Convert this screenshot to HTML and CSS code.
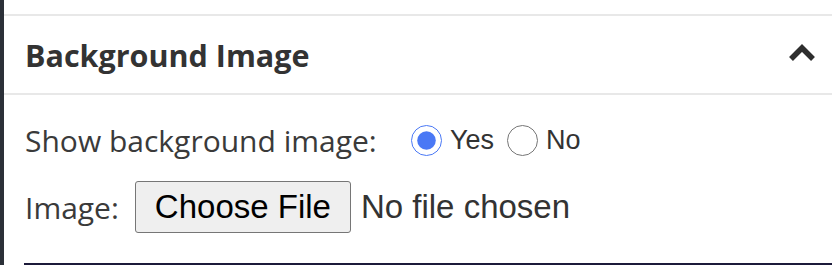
FILE: index.html
```html
<!DOCTYPE html>
<html lang="en">
<head>
    <meta charset="UTF-8">
    <meta name="viewport" content="width=device-width, initial-scale=1.0">
    <title>Background Image</title>
    <link rel="stylesheet" href="styles.css">
</head>
<body>
    <div class="sidebar-edge"></div>

    <div class="panel">
        <div class="panel-gap"></div>

        <section class="settings-section">
            <div class="section-header">
                <h2>Background Image</h2>
                <svg class="chevron" width="28" height="20" viewBox="0 0 28 20">
                    <polyline points="3,16 14,5 25,16" fill="none" stroke="#2e2e2e" stroke-width="5.5" stroke-linejoin="miter"/>
                </svg>
            </div>

            <div class="section-body">
                <div class="form-row">
                    <span class="field-label">Show background image:</span>
                    <label class="radio-option">
                        <input type="radio" name="show-bg" value="yes" checked>
                        <span>Yes</span>
                    </label>
                    <label class="radio-option">
                        <input type="radio" name="show-bg" value="no">
                        <span>No</span>
                    </label>
                </div>

                <div class="form-row">
                    <span class="field-label short">Image:</span>
                    <input type="file" class="file-input" accept="image/*">
                </div>
            </div>

            <div class="section-rule"></div>
        </section>
    </div>
</body>
</html>
```

FILE: styles.css
```css
body {
    margin: 0;
    padding: 0;
    display: flex;
    height: 265px;
    overflow: hidden;
    background: #fff;
    color: #333;
    font-family: "Open Sans", Arial, sans-serif;
}
.sidebar-edge {
    width: 4px;
    background: #2b3038;
    flex-shrink: 0;
}
.panel {
    flex: 1;
    display: flex;
    flex-direction: column;
}
.panel > * {
    flex-shrink: 0;
}
.panel-gap {
    height: 14px;
}
.settings-section {
    border-top: 2px solid #e8e8e8;
}
.section-header {
    display: flex;
    justify-content: space-between;
    align-items: center;
    height: 77px;
    padding: 0 16px 0 21px;
    border-bottom: 2px solid #e8e8e8;
}
.section-header h2 {
    margin: 0;
    font-size: 30.5px;
    font-weight: bold;
    color: #333;
}
.chevron {
    display: block;
    margin-top: -4px;
}
.section-body {
    display: flex;
    flex-direction: column;
    gap: 20px;
    padding: 25px 0 0 21px;
}
.form-row {
    display: flex;
    align-items: center;
}
.field-label {
    font-size: 30px;
    color: #3a3a3a;
    width: 386px;
}
.field-label.short {
    width: auto;
    margin-right: 16px;
}
.radio-option {
    display: flex;
    align-items: center;
    font-family: "Liberation Sans", Arial, sans-serif;
    font-size: 27px;
    color: #333;
    margin-right: 13px;
}
.radio-option input {
    width: 31px;
    height: 31px;
    margin: 0 8px 0 0;
    accent-color: #4a78f5;
}
.file-input {
    font-family: "Liberation Sans", Arial, sans-serif;
    font-size: 33px;
    color: #333;
}
.file-input::file-selector-button {
    font-family: "Liberation Sans", Arial, sans-serif;
    font-size: 33px;
    color: #000;
    background: #efefef;
    border: 1px solid #767676;
    border-radius: 3px;
    padding: 6px 19px;
    margin-right: 10px;
}
.section-rule {
    margin: 30px 0 0 20px;
    border-top: 3px solid #1c1a3a;
}
```
